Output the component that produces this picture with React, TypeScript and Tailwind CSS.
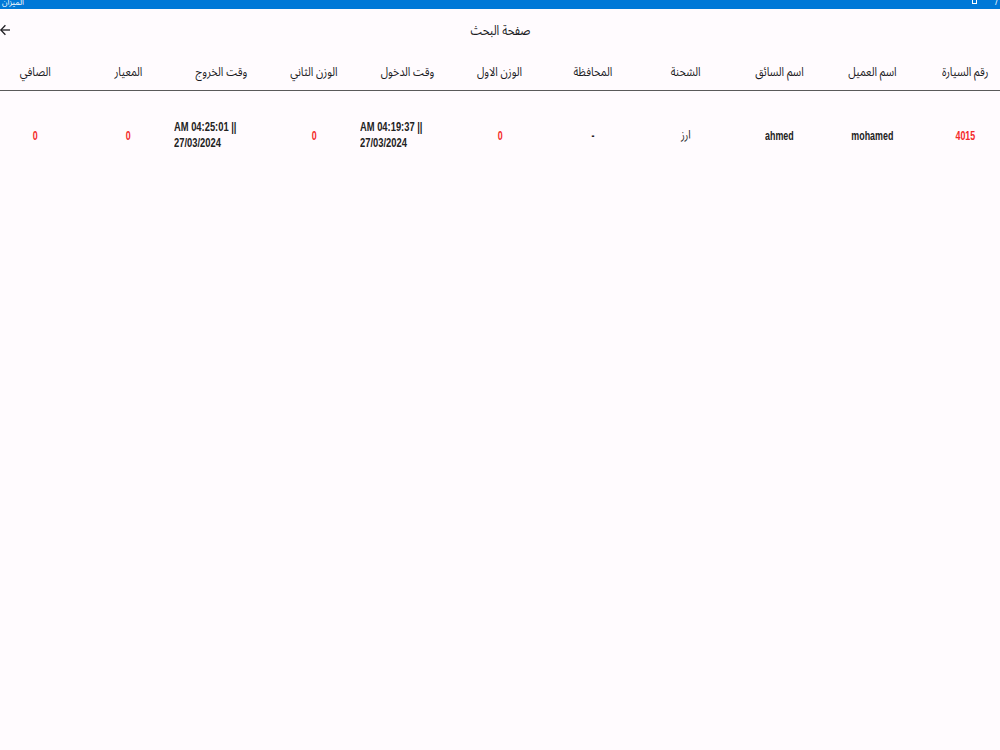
import React from "react";

const headers = [
  "رقم السيارة",
  "اسم العميل",
  "اسم السائق",
  "الشحنة",
  "المحافظة",
  "الوزن الاول",
  "وقت الدخول",
  "الوزن الثاني",
  "وقت الخروج",
  "المعيار",
  "الصافي",
];

type Cell = { text: string; red?: boolean; date?: [string, string] };

const row: Cell[] = [
  { text: "4015", red: true },
  { text: "mohamed" },
  { text: "ahmed" },
  { text: "ارز" },
  { text: "-" },
  { text: "0", red: true },
  { text: "", date: ["AM 04:19:37 ||", "27/03/2024"] },
  { text: "0", red: true },
  { text: "", date: ["AM 04:25:01 ||", "27/03/2024"] },
  { text: "0", red: true },
  { text: "0", red: true },
];

const arabic = "font-['Noto_Sans_Arabic','Noto_Sans_Arabic_UI','Noto_Naskh_Arabic','DejaVu_Sans',sans-serif]";
const latin = "font-['Liberation_Sans',sans-serif]";

export default function App() {
  return (
    <div className="w-full h-[750px] bg-[#fffbfe] overflow-hidden">
      {/* window title bar */}
      <div className="h-[9px] bg-[#0078d7] flex items-start justify-between overflow-hidden">
        <span className={`${arabic} text-[8px] leading-[8px] text-white pl-[2px] -mt-[1px]`}>
          الميزان
        </span>
        <div className="flex items-start gap-[18px] pr-[2px] text-white text-[8px] leading-[6px]">
          <span className="block w-[5px] h-[4px] border border-white border-t-0"></span>
          <span className="block -mt-[1px]">/</span>
        </div>
      </div>

      {/* app bar */}
      <div className="relative h-[42px] flex items-center justify-center">
        <svg
          className="absolute left-0 top-[15px]"
          width="10"
          height="12"
          viewBox="0 0 10 12"
          fill="none"
          stroke="#1c1b1f"
          strokeWidth="1.3"
        >
          <path d="M10 6H0.8" />
          <path d="M5.4 1.3L0.8 6L5.4 10.7" />
        </svg>
        <h1
          className={`${arabic} inline-block scale-x-[0.8] text-[14px] text-[#1c1b1f]`}
          dir="rtl"
        >
          صفحة البحث
        </h1>
      </div>

      {/* header row */}
      <div
        dir="rtl"
        className="flex justify-between h-[40px] pt-[4px] items-center border-b border-[#5a5a5a]"
      >
        {headers.map((h) => (
          <div key={h} className="w-[70px] flex justify-center">
            <span
              className={`${arabic} inline-block scale-x-[0.85] whitespace-nowrap text-[12.5px] text-[#1c1b1f]`}
            >
              {h}
            </span>
          </div>
        ))}
      </div>

      {/* data row */}
      <div dir="rtl" className="flex justify-between h-[90px] items-center">
        {row.map((c, i) => (
          <div key={i} className="w-[70px] flex justify-center">
            {c.date ? (
              <div dir="ltr" className="w-[94px] shrink-0">
                <div
                  className={`${latin} inline-block origin-left scale-x-[0.78] whitespace-nowrap text-left font-bold text-[12px] leading-[16px] text-[#222]`}
                >
                  <div>{c.date[0]}</div>
                  <div>{c.date[1]}</div>
                </div>
              </div>
            ) : /[a-z0-9-]/.test(c.text) ? (
              <span
                className={`${latin} inline-block scale-x-[0.74] whitespace-nowrap font-bold text-[12px] ${
                  c.red ? "text-[#f42a2a]" : "text-[#222]"
                }`}
              >
                {c.text}
              </span>
            ) : (
              <span className={`${arabic} inline-block scale-x-[0.85] whitespace-nowrap text-[12px] text-[#222]`}>
                {c.text}
              </span>
            )}
          </div>
        ))}
      </div>
    </div>
  );
}
